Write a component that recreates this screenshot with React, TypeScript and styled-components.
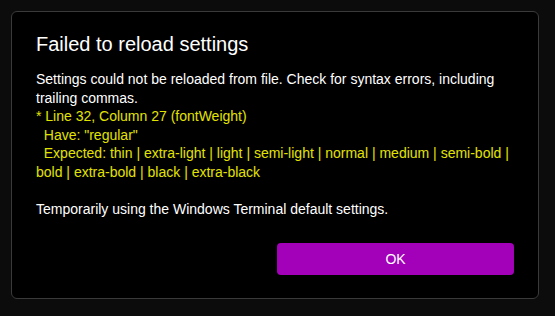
import React from 'react'
import styled, { createGlobalStyle } from 'styled-components'

const GlobalStyle = createGlobalStyle`
  html,
  body {
    margin: 0;
    padding: 0;
    background: #0c0c0c;
  }

  body {
    font-family: 'Liberation Sans', 'Noto Sans', Arial, sans-serif;
    -webkit-font-smoothing: antialiased;
  }
`

const errorLines = [
  { text: '* Line 32, Column 27 (fontWeight)' },
  { text: '  Have: "regular"' },
  {
    text:
      '  Expected: thin | extra-light | light | semi-light | normal | medium | semi-bold |'
  },
  { text: 'bold | extra-bold | black | extra-black' }
]

export default function App() {
  return (
    <>
      <GlobalStyle />
      <Page>
        <Dialog role='dialog' aria-labelledby='dlg-title'>
          <Title id='dlg-title'>Failed to reload settings</Title>
          <Body>
            <Line>
              Settings could not be reloaded from file. Check for syntax errors,
              including
            </Line>
            <Line>trailing commas.</Line>
            {errorLines.map((l, i) => (
              <Line key={i} warn>
                {l.text}
              </Line>
            ))}
            <Line>&nbsp;</Line>
            <Line>Temporarily using the Windows Terminal default settings.</Line>
          </Body>
          <Footer>
            <PrimaryButton type='button'>OK</PrimaryButton>
          </Footer>
        </Dialog>
      </Page>
    </>
  )
}

const Page = styled.div`
  width: 555px;
  height: 316px;
  box-sizing: border-box;
  padding: 11px 0 0 11px;
  background: #0c0c0c;
`

const Dialog = styled.section`
  width: 528px;
  height: 288px;
  box-sizing: border-box;
  display: flex;
  flex-direction: column;
  padding: 18px 24px 23px 24px;
  background: #000000;
  border: 1px solid #3a3a3a;
  border-radius: 6px;
`

const Title = styled.h1`
  margin: 0;
  font-size: 20px;
  line-height: 28px;
  font-weight: 400;
  color: #ffffff;
`

const Body = styled.div`
  margin-top: 12px;
  font-size: 14px;
  line-height: 18.6px;
  color: #ffffff;
`

const Line = styled.div<{ warn?: boolean }>`
  white-space: pre;
  color: ${({ warn }) => (warn ? '#e3e300' : '#ffffff')};
`

const Footer = styled.div`
  margin-top: auto;
  display: flex;
  justify-content: flex-end;
`

const PrimaryButton = styled.button`
  width: 237px;
  height: 32px;
  border: none;
  border-radius: 4px;
  background: #a300ba;
  color: #ffffff;
  font-family: inherit;
  font-size: 14px;
  cursor: pointer;
`
